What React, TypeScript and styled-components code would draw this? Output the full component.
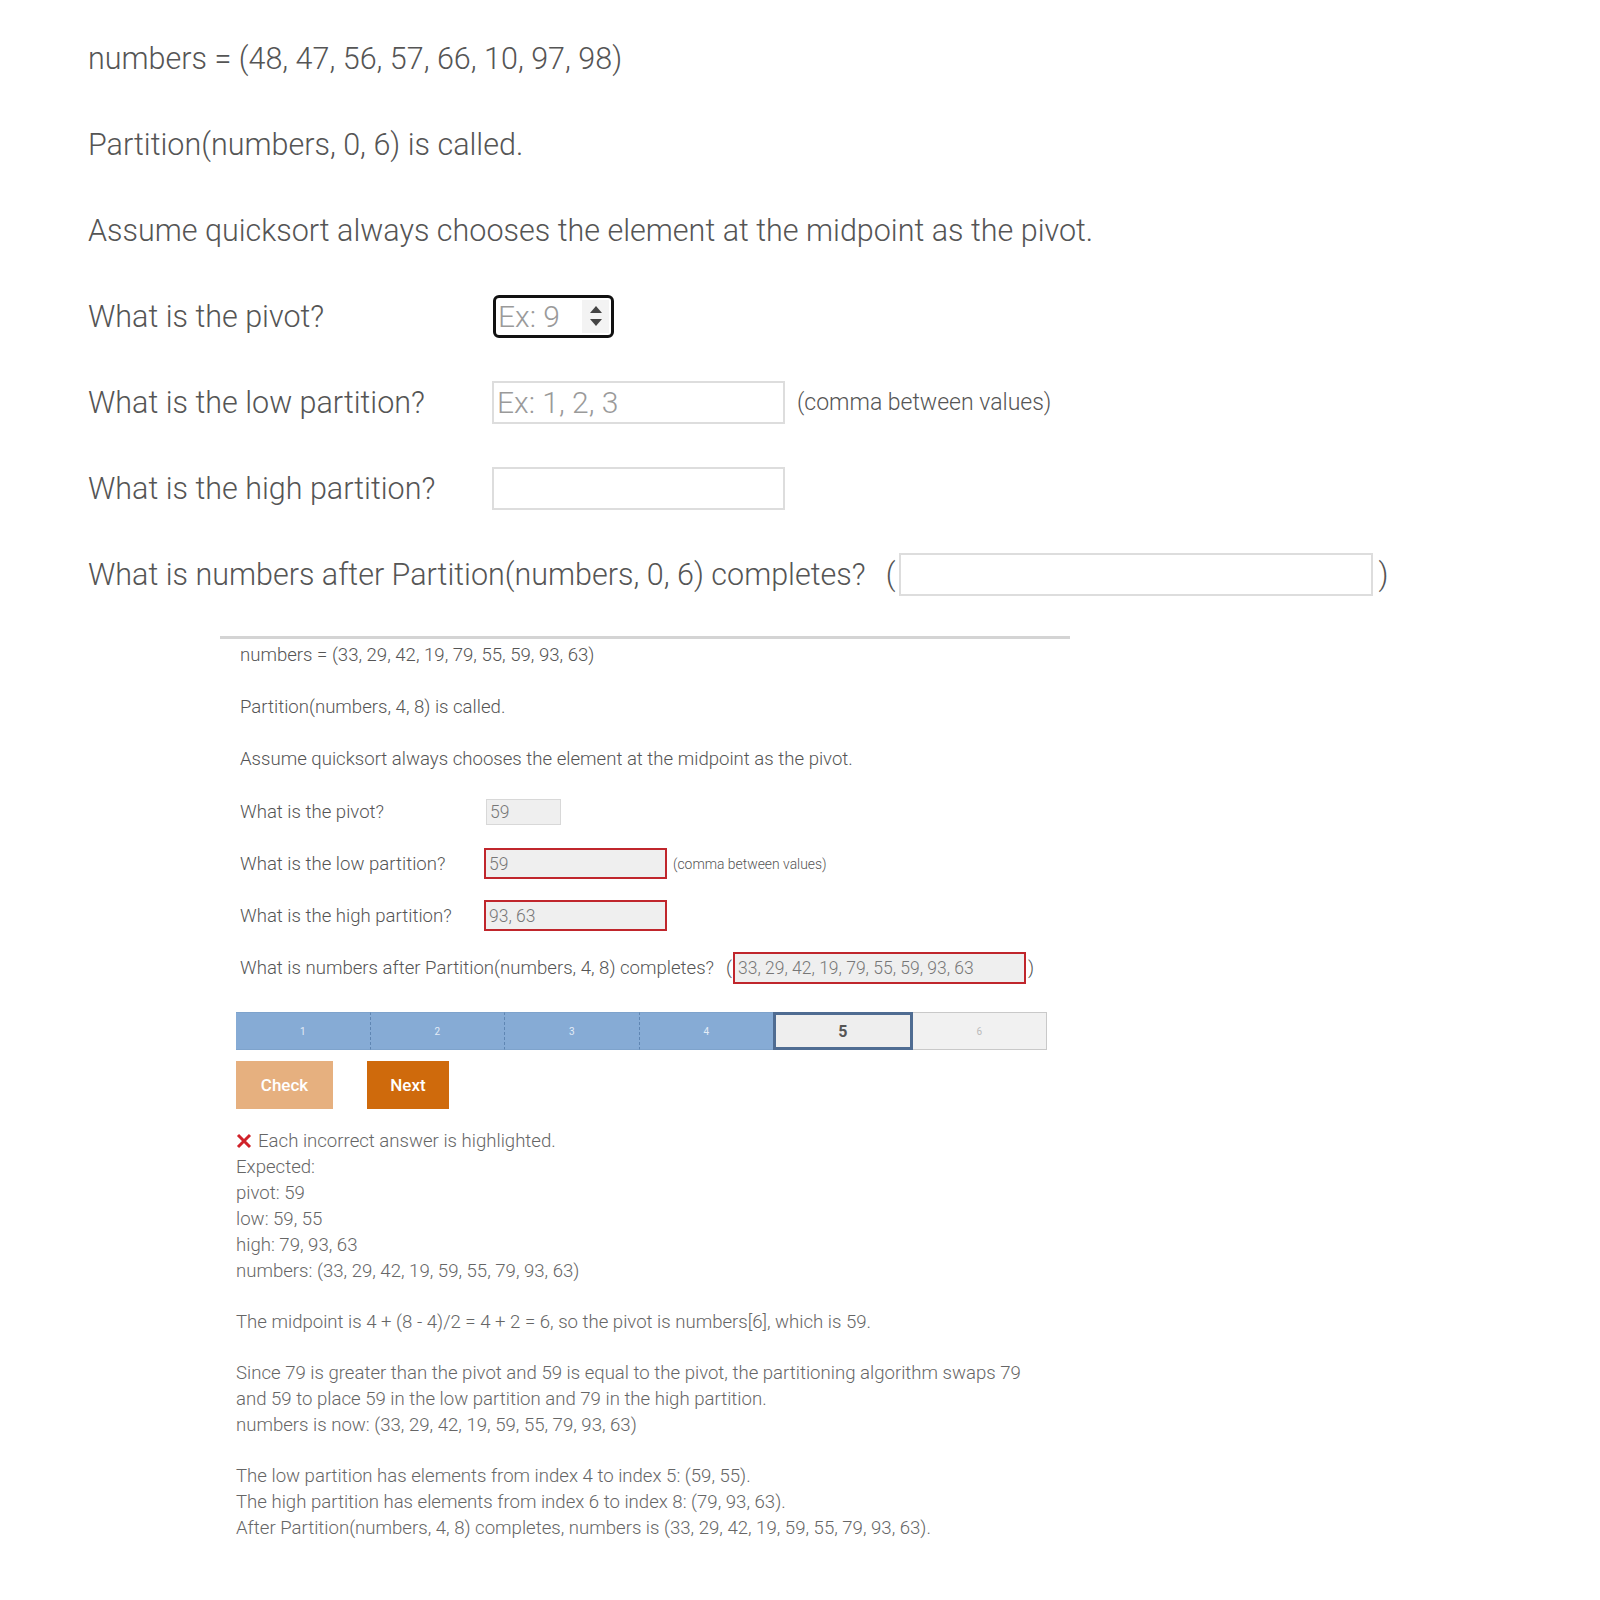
import React from "react";
import styled, { createGlobalStyle } from "styled-components";

const Global = createGlobalStyle`
  html, body { margin: 0; padding: 0; background: #fff; }
  body { font-family: Roboto, "Liberation Sans", sans-serif; font-weight: 300; color: #555; }
  * { box-sizing: border-box; }
`;

const Page = styled.div`
  width: 1600px;
  padding: 15px 0 40px 0;
`;

const TopSection = styled.section`
  padding-left: 88px;
  display: flex;
  flex-direction: column;
`;

const TopRow = styled.div`
  height: 86px;
  display: flex;
  align-items: center;
  font-size: 30.5px;
  color: #555;
  white-space: nowrap;
`;

const TopLabel = styled.span<{ $w?: number }>`
  display: inline-block;
  width: ${(p) => (p.$w ? `${p.$w}px` : "auto")};
  flex: none;
`;

const SpinBox = styled.div`
  width: 121px;
  height: 43px;
  border: 3px solid #111;
  border-radius: 6px;
  display: flex;
  align-items: stretch;
  padding-left: 2px;
  background: #fff;
  overflow: hidden;
`;

const SpinArrows = styled.div`
  flex: 1;
  display: flex;
  align-items: center;
  justify-content: center;
  background: #f3f3f3;
  margin: 2px 2px 2px 0;
`;

const BigInput = styled.input<{ $w: number }>`
  width: ${(p) => p.$w}px;
  height: 43px;
  border: 2px solid #ddd;
  font-family: inherit;
  font-weight: 300;
  font-size: 30px;
  color: #555;
  padding: 0 3px;
  outline: none;
  background: #fff;
  &::placeholder { color: #9a9a9a; }
`;

const SpinInput = styled.input`
  width: 84px;
  border: none;
  outline: none;
  font-family: inherit;
  font-weight: 300;
  font-size: 30px;
  padding: 0;
  background: transparent;
  &::placeholder { color: #9a9a9a; }
`;

const TopHint = styled.span`
  font-size: 23px;
  margin-left: 12px;
`;

const Paren = styled.span<{ $mx: string }>`
  margin: ${(p) => p.$mx};
`;

const Divider = styled.hr`
  margin: 19px 0 0 220px;
  width: 850px;
  border: none;
  height: 3px;
  background: #d4d4d4;
`;

const Bottom = styled.section`
  margin-left: 236px;
  width: 811px;
  display: flex;
  flex-direction: column;
`;

const QList = styled.div`
  display: flex;
  flex-direction: column;
  gap: 20.2px;
  padding-left: 4px;
`;

const QRow = styled.div`
  height: 32px;
  display: flex;
  align-items: center;
  font-size: 18.6px;
  white-space: nowrap;
`;

const QLabel = styled.span<{ $w?: number }>`
  display: inline-block;
  width: ${(p) => (p.$w ? `${p.$w}px` : "auto")};
  flex: none;
`;

const SmallInput = styled.input<{ $w: number; $h: number; $bad?: boolean }>`
  width: ${(p) => p.$w}px;
  height: ${(p) => p.$h}px;
  border: ${(p) => (p.$bad ? "2px solid #c0262c" : "1px solid #d8d8d8")};
  background: #efefef;
  font-family: inherit;
  font-weight: 300;
  font-size: 17.5px;
  color: #777;
  padding: 0 3px;
  outline: none;
`;

const SmallHint = styled.span`
  font-size: 13.9px;
  margin-left: 6px;
`;

const Progress = styled.div`
  margin-top: 28px;
  height: 38px;
  display: flex;
`;

const Seg = styled.div<{ $state: "done" | "current" | "todo"; $edge?: boolean }>`
  flex: 1;
  display: flex;
  align-items: center;
  justify-content: center;
  font-family: Roboto, "Liberation Sans", sans-serif;
  ${(p) =>
    p.$state === "done"
      ? `background: #86abd5; color: #e3ecf7; font-size: 10px; font-weight: 400;
         border-top: 1px solid #7ea3cc; border-bottom: 1px solid #7ea3cc;
         border-right: ${p.$edge ? "none" : "1px dashed #5f86b3"};`
      : p.$state === "current"
      ? `background: #eeeeee; color: #555; font-size: 16px; font-weight: 700;
         border: 3px solid #4f6c92;`
      : `background: #f1f1f1; color: #bbb; font-size: 10px; font-weight: 400;
         border: 1px solid #c9c9c9; border-left: none;`}
`;

const Buttons = styled.div`
  margin-top: 11px;
  display: flex;
  gap: 34px;
`;

const Btn = styled.button<{ $w: number; $primary?: boolean }>`
  width: ${(p) => p.$w}px;
  height: 48px;
  border: none;
  background: ${(p) => (p.$primary ? "#cf6a0c" : "#e6b07f")};
  color: #fff;
  font-family: Roboto, "Liberation Sans", sans-serif;
  font-size: 17px;
  font-weight: 500;
  padding: 0;
`;

const Feedback = styled.div`
  margin-top: 19px;
  font-size: 18.6px;
  line-height: 26px;
  color: #666;
`;

const Para = styled.p`
  margin: 25px 0 0 0;
  font-size: 18.6px;
  line-height: 26px;
  color: #666;
`;

const Line = styled.div``;

const ErrLine = styled.div`
  display: flex;
  align-items: center;
  gap: 6px;
`;

const Cross = () => (
  <svg width="16" height="16" viewBox="0 0 16 16">
    <path d="M2 2 L14 14 M14 2 L2 14" stroke="#d0222a" strokeWidth="3" strokeLinecap="butt" />
  </svg>
);

const Arrows = () => (
  <svg width="16" height="26" viewBox="0 0 16 26">
    <path d="M2 10 L8 3 L14 10 Z" fill="#444" />
    <path d="M2 16 L8 23 L14 16 Z" fill="#444" />
  </svg>
);

export default function App() {
  return (
    <Page>
      <Global />
      <TopSection>
        <TopRow>numbers = (48, 47, 56, 57, 66, 10, 97, 98)</TopRow>
        <TopRow>Partition(numbers, 0, 6) is called.</TopRow>
        <TopRow>Assume quicksort always chooses the element at the midpoint as the pivot.</TopRow>
        <TopRow>
          <TopLabel $w={405}>What is the pivot?</TopLabel>
          <SpinBox>
            <SpinInput placeholder="Ex: 9" />
            <SpinArrows>
              <Arrows />
            </SpinArrows>
          </SpinBox>
        </TopRow>
        <TopRow>
          <TopLabel $w={404}>What is the low partition?</TopLabel>
          <BigInput $w={293} placeholder="Ex: 1, 2, 3" />
          <TopHint>(comma between values)</TopHint>
        </TopRow>
        <TopRow>
          <TopLabel $w={404}>What is the high partition?</TopLabel>
          <BigInput $w={293} />
        </TopRow>
        <TopRow>
          <TopLabel>What is numbers after Partition(numbers, 0, 6) completes?</TopLabel>
          <Paren $mx="0 4px 0 20px">(</Paren>
          <BigInput $w={474} />
          <Paren $mx="0 0 0 5px">)</Paren>
        </TopRow>
      </TopSection>
      <Divider />
      <Bottom>
        <QList>
          <QRow>numbers = (33, 29, 42, 19, 79, 55, 59, 93, 63)</QRow>
          <QRow>Partition(numbers, 4, 8) is called.</QRow>
          <QRow>Assume quicksort always chooses the element at the midpoint as the pivot.</QRow>
          <QRow>
            <QLabel $w={246}>What is the pivot?</QLabel>
            <SmallInput $w={75} $h={26} defaultValue="59" />
          </QRow>
          <QRow>
            <QLabel $w={244}>What is the low partition?</QLabel>
            <SmallInput $w={183} $h={31} $bad defaultValue="59" />
            <SmallHint>(comma between values)</SmallHint>
          </QRow>
          <QRow>
            <QLabel $w={244}>What is the high partition?</QLabel>
            <SmallInput $w={183} $h={31} $bad defaultValue="93, 63" />
          </QRow>
          <QRow>
            <QLabel>What is numbers after Partition(numbers, 4, 8) completes?</QLabel>
            <Paren $mx="0 1px 0 12px">(</Paren>
            <SmallInput $w={293} $h={32} $bad defaultValue="33, 29, 42, 19, 79, 55, 59, 93, 63" />
            <Paren $mx="0 0 0 2px">)</Paren>
          </QRow>
        </QList>
        <Progress>
          <Seg $state="done">1</Seg>
          <Seg $state="done">2</Seg>
          <Seg $state="done">3</Seg>
          <Seg $state="done" $edge>4</Seg>
          <Seg $state="current">5</Seg>
          <Seg $state="todo">6</Seg>
        </Progress>
        <Buttons>
          <Btn $w={97}>Check</Btn>
          <Btn $w={82} $primary>Next</Btn>
        </Buttons>
        <Feedback>
          <ErrLine>
            <Cross />
            <span>Each incorrect answer is highlighted.</span>
          </ErrLine>
          <Line>Expected:</Line>
          <Line>pivot: 59</Line>
          <Line>low: 59, 55</Line>
          <Line>high: 79, 93, 63</Line>
          <Line>numbers: (33, 29, 42, 19, 59, 55, 79, 93, 63)</Line>
        </Feedback>
        <Para>The midpoint is 4 + (8 - 4)/2 = 4 + 2 = 6, so the pivot is numbers[6], which is 59.</Para>
        <Para>
          Since 79 is greater than the pivot and 59 is equal to the pivot, the partitioning algorithm swaps 79
          <br />
          and 59 to place 59 in the low partition and 79 in the high partition.
          <br />
          numbers is now: (33, 29, 42, 19, 59, 55, 79, 93, 63)
        </Para>
        <Para>
          The low partition has elements from index 4 to index 5: (59, 55).
          <br />
          The high partition has elements from index 6 to index 8: (79, 93, 63).
          <br />
          After Partition(numbers, 4, 8) completes, numbers is (33, 29, 42, 19, 59, 55, 79, 93, 63).
        </Para>
      </Bottom>
    </Page>
  );
}
